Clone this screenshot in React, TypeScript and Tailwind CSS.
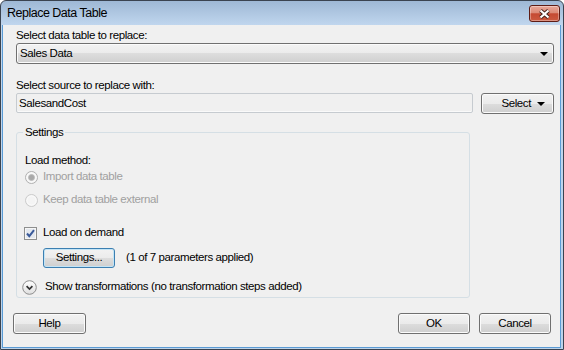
const btn =
  "flex items-center justify-center h-[21px] border border-[#707070] rounded-[3px] bg-[linear-gradient(to_bottom,#f2f2f2_0%,#ebebeb_50%,#dddddd_50%,#cfcfcf_100%)] shadow-[inset_0_0_0_1px_#fbfbfb]";

function DownArrow() {
  return (
    <svg width="8" height="4" viewBox="0 0 8 4">
      <polygon points="0,0 8,0 4,4" fill="#000" />
    </svg>
  );
}

function Radio({ checked }: { checked?: boolean }) {
  return (
    <svg width="13" height="13" viewBox="0 0 13 13" className="shrink-0">
      <circle cx="6.5" cy="6.5" r="6" fill="#f4f4f4" stroke={checked ? "#b0b0b0" : "#cacaca"} />
      <circle cx="6.5" cy="6.5" r="4.5" fill="none" stroke="#fbfbfb" />
      {checked && <circle cx="6.5" cy="6.5" r="3" fill="#a9a9a9" stroke="#b9b9b9" strokeWidth="0.8" />}
    </svg>
  );
}

function Checkbox() {
  return (
    <svg width="13" height="13" viewBox="0 0 13 13" className="shrink-0">
      <rect x="0.5" y="0.5" width="12" height="12" fill="#f6f6f6" stroke="#8e8f8f" />
      <rect x="2" y="2" width="9" height="9" fill="#e4e8ee" />
      <path d="M3 6.5 L5.3 9.2 L10 3.2" fill="none" stroke="#3a5a9a" strokeWidth="2" />
    </svg>
  );
}

function Expander() {
  return (
    <svg width="15" height="15" viewBox="0 0 15 15" className="shrink-0">
      <defs>
        <linearGradient id="exg" x1="0" y1="0" x2="0" y2="1">
          <stop offset="0" stopColor="#ffffff" />
          <stop offset="1" stopColor="#dedede" />
        </linearGradient>
      </defs>
      <circle cx="7.5" cy="7.5" r="6.8" fill="url(#exg)" stroke="#8d8d8d" />
      <path d="M4.6 6.2 L7.5 9.1 L10.4 6.2" fill="none" stroke="#333" strokeWidth="1.7" />
    </svg>
  );
}

export default function App() {
  return (
    <div className="w-[564px] h-[350px] flex flex-col border border-[#3a4350] rounded-t-[6px] bg-[linear-gradient(to_bottom,#9eb8d5_0px,#c0d6ee_24px,#bcd3ea_100%)] font-['Liberation_Sans',Arial,sans-serif] text-[11.5px] tracking-[-0.4px] text-black">
      {/* Title bar */}
      <div className="h-[24px] shrink-0 flex pl-[6px] pr-[3px]">
        <span className="text-[12.5px] leading-[24px] tracking-[-0.5px]">Replace Data Table</span>
        <div className="ml-auto mt-[4px] w-[31px] h-[17px] flex items-center justify-center border border-[#5e1c14] rounded-[3px] bg-[linear-gradient(to_bottom,#e9a899_0%,#dc8a76_45%,#c54a32_52%,#cc5a40_100%)] shadow-[inset_0_0_0_1px_rgba(255,255,255,0.35)]">
          <svg width="13" height="10" viewBox="0 0 13 10">
            <path d="M2.5 1.5 L10.5 8.5 M10.5 1.5 L2.5 8.5" stroke="#40201a" strokeWidth="4" />
            <path d="M2.5 1.5 L10.5 8.5 M10.5 1.5 L2.5 8.5" stroke="#ffffff" strokeWidth="2.2" />
          </svg>
        </div>
      </div>

      {/* Client area */}
      <div className="flex-1 ml-[1px] mr-[2px] mb-[1px] border border-t-0 border-[#5a9bd5] bg-[#f0f0f0] flex flex-col pl-[10px] pr-[6px]">
        <div className="flex flex-col pl-[3px]">
          <div className="mt-[3px] h-[14px] leading-[14px]">Select data table to replace:</div>
          <div className="mt-[1px] h-[21px] flex items-center border border-[#707070] rounded-[3px] bg-[linear-gradient(to_bottom,#f2f2f2_0%,#ebebeb_50%,#dddddd_50%,#cfcfcf_100%)] shadow-[inset_0_0_0_1px_#fbfbfb] pl-[3px] pr-[5px]">
            <span className="leading-[19px]">Sales Data</span>
            <span className="ml-auto flex">
              <DownArrow />
            </span>
          </div>

          <div className="mt-[14px] h-[14px] leading-[14px]">Select source to replace with:</div>
          <div className="mt-[1px] flex gap-[8px]">
            <div className="flex-1 h-[20px] border border-[#c6cbd0] rounded-[2px] bg-[#f0f0f0] shadow-[inset_0_-1px_0_#fafafa] pl-[2px] leading-[18px]">
              SalesandCost
            </div>
            <div className={`${btn} w-[73px] h-[20px] justify-end pr-[8px] gap-[6px]`}>
              <span>Select</span>
              <DownArrow />
            </div>
          </div>

          <fieldset className="mt-[11px] w-[454px] border border-[#d5dfe5] rounded-[3px] pl-[6px] pr-[6px] pb-[2px]">
            <legend className="px-[2px] h-[14px] leading-[14px]">Settings</legend>
            <div className="flex flex-col pl-[2px]">
              <div className="mt-[14px] h-[14px] leading-[14px]">Load method:</div>
              <div className="mt-[2px] h-[16px] flex items-center gap-[5px] text-[#a0a0a0]">
                <Radio checked />
                <span>Import data table</span>
              </div>
              <div className="mt-[7px] h-[16px] flex items-center gap-[5px] text-[#a0a0a0]">
                <Radio />
                <span>Keep data table external</span>
              </div>
              <div className="mt-[17px] h-[16px] flex items-center gap-[6px] -ml-[1px]">
                <Checkbox />
                <span>Load on demand</span>
              </div>
              <div className="mt-[7px] flex items-center">
                <div className="ml-[18px] w-[72px] h-[20px] flex items-center justify-center border border-[#3c7fb1] rounded-[3px] bg-[linear-gradient(to_bottom,#f2f2f2_0%,#ebebeb_50%,#dddddd_50%,#cfcfcf_100%)] shadow-[inset_0_0_0_1px_#c3e4f6]">
                  Settings...
                </div>
                <span className="ml-[11px]">(1 of 7 parameters applied)</span>
              </div>
              <div className="mt-[11px] h-[16px] flex items-center gap-[8px] -ml-[3px]">
                <Expander />
                <span>Show transformations (no transformation steps added)</span>
              </div>
            </div>
          </fieldset>
        </div>

        <div className="mt-[15px] flex">
          <div className={`${btn} w-[73px]`}>Help</div>
          <div className="ml-auto mr-[3px] flex gap-[9px]">
            <div className={`${btn} w-[72px]`}>OK</div>
            <div className={`${btn} w-[72px]`}>Cancel</div>
          </div>
        </div>
      </div>
    </div>
  );
}
